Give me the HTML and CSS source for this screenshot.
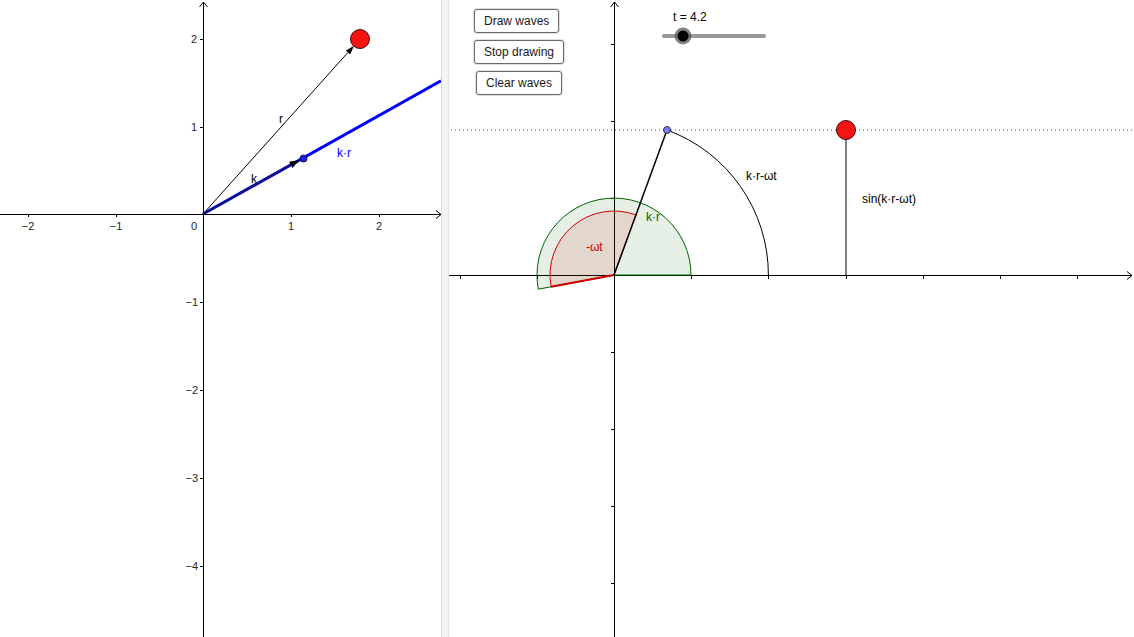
FILE: index.html
```html
<!DOCTYPE html>
<html lang="en">
<head>
<meta charset="utf-8">
<title>Waves</title>
<link rel="stylesheet" href="styles.css">
</head>
<body>
<div class="app">
  <div class="view view-left">
    <svg class="canvas" width="441" height="637" viewBox="0 0 441 637">
      <g class="axis">
        <line x1="0" y1="214.5" x2="441" y2="214.5"/>
        <polyline class="arrow" points="436,210.5 441,214.5 436,218.5"/>
        <line x1="203.5" y1="2" x2="203.5" y2="637"/>
        <polyline class="arrow" points="199.5,7 203.5,2 207.5,7"/>
        <line x1="28.5" y1="214" x2="28.5" y2="217"/>
        <line x1="116.5" y1="214" x2="116.5" y2="217"/>
        <line x1="291.5" y1="214" x2="291.5" y2="217"/>
        <line x1="379.5" y1="214" x2="379.5" y2="217"/>
        <line x1="200" y1="39.5" x2="203" y2="39.5"/>
        <line x1="200" y1="127.5" x2="203" y2="127.5"/>
        <line x1="200" y1="302.5" x2="203" y2="302.5"/>
        <line x1="200" y1="390.5" x2="203" y2="390.5"/>
        <line x1="200" y1="478.5" x2="203" y2="478.5"/>
        <line x1="200" y1="566.5" x2="203" y2="566.5"/>
      </g>
      <g class="ticklabel ticklabel-x">
        <text x="28" y="230">−2</text>
        <text x="116" y="230">−1</text>
        <text x="194" y="230">0</text>
        <text x="291" y="230">1</text>
        <text x="379" y="230">2</text>
      </g>
      <g class="ticklabel ticklabel-y">
        <text x="197" y="43">2</text>
        <text x="197" y="131">1</text>
        <text x="198" y="306">−1</text>
        <text x="198" y="394">−2</text>
        <text x="198" y="482">−3</text>
        <text x="198" y="570">−4</text>
      </g>
      <line class="line-blue" x1="203" y1="214" x2="441" y2="80.7"/>
      <line class="vec-k" x1="203" y1="214" x2="292" y2="164.2"/>
      <polygon class="head" points="299.5,160 292.5,168 289.1,161.8"/>
      <line class="vec-r" x1="203" y1="214" x2="348" y2="52.4"/>
      <polygon class="head" points="354,45.7 350.2,54.4 345.8,50.4"/>
      <circle class="pt-blue" cx="303.5" cy="158.5" r="3.5"/>
      <circle class="pt-red" cx="360" cy="39" r="9.5"/>
      <text class="lbl" x="279" y="123">r</text>
      <text class="lbl" x="251" y="183">k</text>
      <text class="lbl lbl-blue" x="337" y="157">k·r</text>
    </svg>
  </div>
  <div class="divider"></div>
  <div class="view view-right">
    <svg class="canvas" width="685" height="637" viewBox="449 0 685 637">
      <g class="axis">
        <line x1="449" y1="275.5" x2="1132" y2="275.5"/>
        <polyline class="arrow" points="1127,271.5 1132,275.5 1127,279.5"/>
        <line x1="614.5" y1="2" x2="614.5" y2="637"/>
        <polyline class="arrow" points="610.5,7 614.5,2 618.5,7"/>
        <line x1="460.5" y1="275" x2="460.5" y2="279"/>
        <line x1="537.5" y1="275" x2="537.5" y2="279"/>
        <line x1="691.5" y1="275" x2="691.5" y2="279"/>
        <line x1="768.5" y1="275" x2="768.5" y2="279"/>
        <line x1="846.5" y1="275" x2="846.5" y2="279"/>
        <line x1="923.5" y1="275" x2="923.5" y2="279"/>
        <line x1="1000.5" y1="275" x2="1000.5" y2="279"/>
        <line x1="1077.5" y1="275" x2="1077.5" y2="279"/>
        <line x1="611" y1="44.5" x2="614" y2="44.5"/>
        <line x1="611" y1="121.5" x2="614" y2="121.5"/>
        <line x1="611" y1="198.5" x2="614" y2="198.5"/>
        <line x1="611" y1="352.5" x2="614" y2="352.5"/>
        <line x1="611" y1="429.5" x2="614" y2="429.5"/>
        <line x1="611" y1="506.5" x2="614" y2="506.5"/>
        <line x1="611" y1="583.5" x2="614" y2="583.5"/>
      </g>
      <line class="dotted" x1="451" y1="130" x2="1134" y2="130"/>
      <path class="sector-green" d="M614,275 L691,275 A77,77 0 1 0 538.3,289.2 Z"/>
      <path class="sector-red" d="M614,275 L635.9,214.9 A64,64 0 0 0 551.1,286.8 Z"/>
      <line class="edge-red" x1="614" y1="275" x2="551.1" y2="286.8"/>
      <path class="arc" d="M667,130 A154.4,154.4 0 0 1 768.4,275"/>
      <line class="radius" x1="614" y1="275" x2="667" y2="130"/>
      <line class="drop" x1="846" y1="130" x2="846" y2="275"/>
      <circle class="pt-lilac" cx="667" cy="130" r="3.5"/>
      <circle class="pt-red" cx="846" cy="130" r="9.5"/>
      <text class="lbl" x="746" y="180">k·r-ωt</text>
      <text class="lbl lbl-green" x="646" y="221">k·r</text>
      <text class="lbl lbl-red" x="586" y="251">-ωt</text>
      <text class="lbl" x="862" y="203">sin(k·r-ωt)</text>
    </svg>
    <div class="buttons">
      <button class="btn">Draw waves</button>
      <button class="btn">Stop drawing</button>
      <button class="btn btn-shift">Clear waves</button>
    </div>
    <div class="slider">
      <div class="slider-label">t = 4.2</div>
      <div class="slider-track"><span class="slider-knob"></span></div>
    </div>
  </div>
</div>
</body>
</html>
```
FILE: styles.css
```css
html, body {
  margin: 0;
  padding: 0;
  background: #ffffff;
}
body {
  width: 1134px;
  height: 637px;
  overflow: hidden;
  font-family: "Liberation Sans", Arial, sans-serif;
}
.app {
  display: flex;
  width: 1134px;
  height: 637px;
}
.view {
  position: relative;
  height: 637px;
  overflow: hidden;
}
.view-left {
  width: 441px;
  flex: none;
}
.view-right {
  flex: 1;
}
.divider {
  flex: none;
  width: 6px;
  height: 637px;
  background: #f4f4f4;
  border-left: 1px solid #d8d8d8;
  border-right: 1px solid #e6e6e6;
}
.canvas {
  display: block;
}
.axis line,
.axis polyline {
  stroke: #000;
  stroke-width: 1;
  fill: none;
}
.ticklabel {
  font-family: "Liberation Sans", Arial, sans-serif;
  font-size: 11px;
  fill: #262626;
}
.ticklabel-x text {
  text-anchor: middle;
}
.ticklabel-y text {
  text-anchor: end;
}
.lbl {
  font-family: "Liberation Sans", Arial, sans-serif;
  font-size: 12px;
  fill: #000;
}
.lbl-blue { fill: #0000ff; }
.lbl-green { fill: #006400; }
.lbl-red { fill: #cc0000; }
.line-blue {
  stroke: #0000ff;
  stroke-width: 3;
}
.vec-k {
  stroke: #14146e;
  stroke-width: 2;
}
.vec-r {
  stroke: #000;
  stroke-width: 1;
}
.head {
  fill: #000;
}
.pt-blue {
  fill: #1c1cf0;
  stroke: #111144;
  stroke-width: 1;
}
.pt-lilac {
  fill: #7a7aff;
  stroke: #333;
  stroke-width: 1;
}
.pt-red {
  fill: #f41414;
  stroke: #3a0a0a;
  stroke-width: 1;
}
.dotted {
  stroke: #555;
  stroke-width: 1;
  stroke-dasharray: 1 3;
}
.sector-green {
  fill: rgba(0, 100, 0, 0.1);
  stroke: #006400;
  stroke-width: 1;
}
.sector-red {
  fill: rgba(204, 0, 0, 0.1);
  stroke: #cc0000;
  stroke-width: 1;
}
.edge-red {
  stroke: #cc0000;
  stroke-width: 2;
}
.arc {
  fill: none;
  stroke: #000;
  stroke-width: 1;
}
.radius {
  stroke: #000;
  stroke-width: 1.5;
}
.drop {
  stroke: #808080;
  stroke-width: 2;
}
.buttons {
  position: absolute;
  left: 25px;
  top: 9px;
  display: flex;
  flex-direction: column;
  align-items: flex-start;
  gap: 7px;
}
.btn {
  box-sizing: border-box;
  height: 24px;
  margin: 0;
  padding: 0 9px;
  font-family: "Liberation Sans", Arial, sans-serif;
  font-size: 12px;
  color: #1a1a1a;
  background: #ffffff;
  border: 1px solid #6a6a6a;
  border-radius: 3px;
  box-shadow: 0 0 0 1px rgba(0, 0, 0, 0.12);
}
.btn-shift {
  margin-left: 2px;
}
.slider {
  position: absolute;
  left: 213px;
  top: 10px;
  width: 104px;
}
.slider-label {
  margin-left: 11px;
  font-size: 12px;
  line-height: 14px;
  color: #000;
}
.slider-track {
  position: relative;
  margin-top: 9.5px;
  height: 4px;
  border-radius: 2px;
  background: #999999;
}
.slider-knob {
  position: absolute;
  left: 21px;
  top: 2px;
  width: 11px;
  height: 11px;
  border-radius: 50%;
  background: #000;
  transform: translate(-50%, -50%);
  box-shadow: 0 0 0 3px rgba(90, 90, 90, 0.75);
}
```
